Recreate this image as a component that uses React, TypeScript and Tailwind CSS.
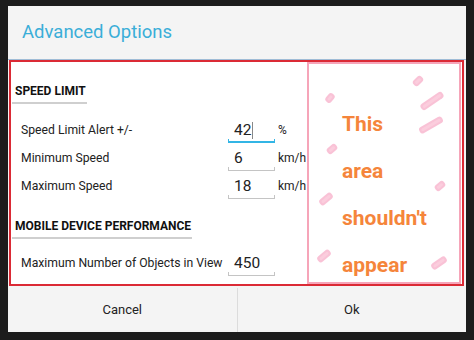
import React from 'react';

type Row = { label: string; value: string; unit: string; active?: boolean };

const speedRows: Row[] = [
  { label: 'Speed Limit Alert +/-', value: '42', unit: '%', active: true },
  { label: 'Minimum Speed', value: '6', unit: 'km/h' },
  { label: 'Maximum Speed', value: '18', unit: 'km/h' },
];

// pink stamp marks in the "shouldn't appear" panel, panel-relative coords
const marks = [
  { x: 109, y: 17, w: 11, r: -45 },
  { x: 123, y: 37, w: 26, r: -35 },
  { x: 21, y: 34, w: 10, r: -50 },
  { x: 23, y: 85, w: 11, r: -40 },
  { x: 122, y: 61, w: 26, r: -30 },
  { x: 131, y: 122, w: 11, r: -40 },
  { x: 17, y: 135, w: 15, r: -40 },
  { x: 15, y: 192, w: 15, r: -40 },
  { x: 130, y: 199, w: 17, r: -35 },
];

function SectionHeader({ title, pt }: { title: string; pt: string }) {
  return (
    <div className={`flex ${pt}`}>
      <div className="ml-[1px] pl-[3px] pr-[1px] pb-[3px] border-b-2 border-[#cfcfcf] text-[12px] leading-4 font-bold text-[#111]">
        {title}
      </div>
    </div>
  );
}

function FieldRow({ row }: { row: Row }) {
  return (
    <div className="flex h-[28px] items-center pl-[10px]">
      <div className="w-[207px] text-[12.2px] text-[#222]">{row.label}</div>
      <div className="relative h-[28px] w-[47px]">
        <div className="pl-[6px] pt-[4px] text-[15.5px] leading-[20px] text-[#222] flex items-center">
          {row.value}
          {row.active && <span className="ml-[1px] inline-block h-[17px] w-[1px] bg-[#888]" />}
        </div>
        <span
          className={
            row.active
              ? 'absolute left-0 bottom-[1px] h-[4px] w-[47px] border-x border-b-2 border-[#33b5e5]'
              : 'absolute left-0 bottom-[1px] h-[4px] w-[47px] border-x border-b border-[#c4c4c4]'
          }
        />
      </div>
      <div className="ml-[3px] text-[12px] text-[#222]">{row.unit}</div>
    </div>
  );
}

export default function App() {
  return (
    <div className="h-[340px] w-[474px] bg-[#1c1c1c] pt-[6px] pl-[8px] font-[Roboto,sans-serif] overflow-hidden">
      <div className="flex h-[326px] w-[458px] flex-col bg-[#f4f4f4]">
        <div className="flex h-[54px] items-center pl-[14px] text-[18.5px] text-[#3aaed8] border-b border-[#9fbcd6]">
          Advanced Options
        </div>

        <div className="ml-[1px] mr-[2px] flex h-[226px] border-2 border-[#db2a35] bg-white">
          <div className="flex w-[296px] flex-col">
            <SectionHeader title="SPEED LIMIT" pt="pt-[21px]" />
            <div className="mt-[12px] flex flex-col">
              {speedRows.map((r) => (
                <FieldRow key={r.label} row={r} />
              ))}
            </div>
            <SectionHeader title="MOBILE DEVICE PERFORMANCE" pt="pt-[18px]" />
            <div className="mt-[10px]">
              <FieldRow row={{ label: 'Maximum Number of Objects in View', value: '450', unit: '' }} />
            </div>
          </div>

          <div className="relative flex-1 border-2 border-[#f6a5b9] mr-[1px]">
            <svg className="absolute inset-0" width="154" height="222">
              {marks.map((m, i) => (
                <g key={i} transform={`translate(${m.x} ${m.y}) rotate(${m.r})`}>
                  <rect x={-m.w / 2} y={-3.5} width={m.w} height={7} rx={3} fill="#f7a8c4" opacity={0.7} />
                  <rect x={-m.w / 2 + 2} y={-1.5} width={m.w - 4} height={3} rx={1.5} fill="#fbd0df" opacity={0.8} />
                </g>
              ))}
            </svg>
            <div className="relative flex flex-col pl-[33px] pt-[37px] text-[21px] font-bold leading-[47px] text-[#f5853b]">
              <span>This</span>
              <span>area</span>
              <span>shouldn't</span>
              <span>appear</span>
            </div>
          </div>
        </div>

        <div className="flex flex-1 pt-[2px] text-[13px] text-[#222]">
          <button className="flex flex-1 items-center justify-center border-r border-[#dcdcdc]">Cancel</button>
          <button className="flex flex-1 items-center justify-center">Ok</button>
        </div>
      </div>
    </div>
  );
}
